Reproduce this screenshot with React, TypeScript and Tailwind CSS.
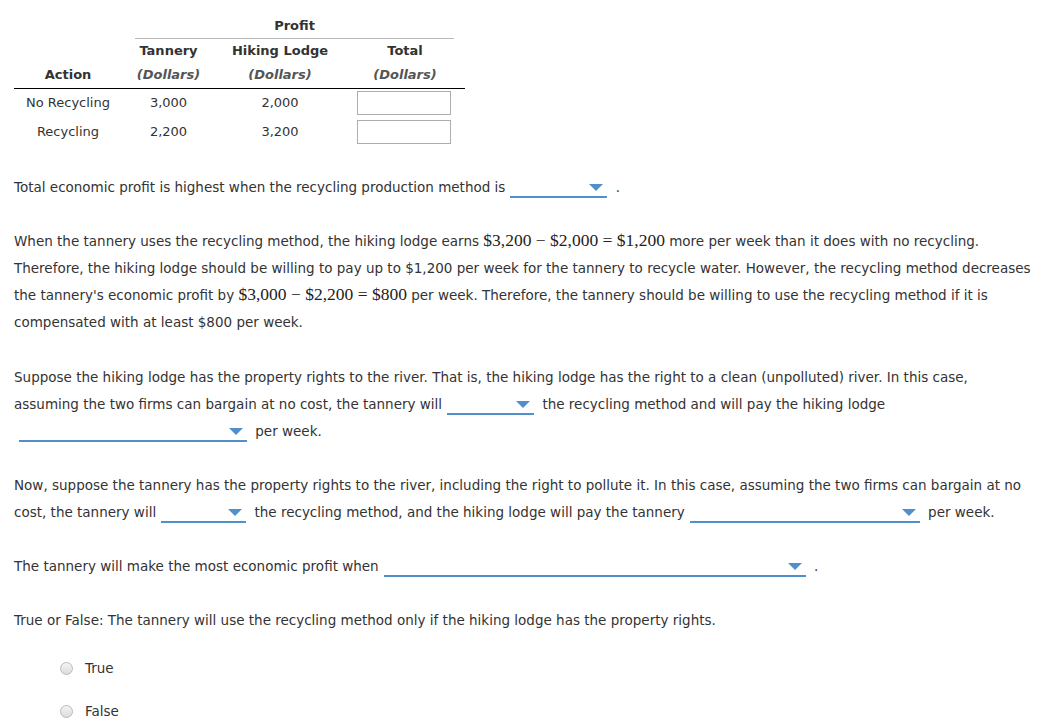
import React from "react";

const font = { fontFamily: '"DejaVu Sans", Verdana, sans-serif' };

function Dropdown({ w }: { w: string }) {
  return (
    <span
      className={`relative inline-block ${w} h-[18px] ml-[5px] mr-[4px] border-b-2 border-[#4f8fcb] align-[-6px]`}
    >
      <svg width="14" height="7" viewBox="0 0 14 7" className="absolute right-[4px] bottom-[5px]">
        <path d="M0 0 H14 L7 7 Z" fill="#4f8fcb" />
      </svg>
    </span>
  );
}

function M({ children }: { children: React.ReactNode }) {
  return (
    <span className="text-[17.5px] leading-none font-['Liberation_Serif',serif] text-[#222]">
      {children}
    </span>
  );
}

function Radio({ label }: { label: string }) {
  return (
    <div className="flex items-center h-[20px] pl-[46px]">
      <span className="w-[13px] h-[13px] rounded-full border border-[#b9b9b9] bg-gradient-to-b from-[#f4f4f4] to-[#dcdcdc]" />
      <span className="ml-[12px]">{label}</span>
    </div>
  );
}

function ProfitTable() {
  const cols = "grid grid-cols-[108px_93px_130px_120px] text-center";
  return (
    <div className="w-[451px] text-[13px]">
      <div className={cols}>
        <div />
        <div className="col-span-3 ml-[13px] mr-[11px] border-b border-[#b8b8b8] font-bold leading-[18px] pb-[3px]">
          Profit
        </div>
      </div>
      <div className={`${cols} font-bold leading-[18px] mt-[3px]`}>
        <div />
        <div>Tannery</div>
        <div>Hiking Lodge</div>
        <div>Total</div>
      </div>
      <div className={`${cols} leading-[18px] mt-[6px] pb-[4px] border-b-[1.5px] border-black`}>
        <div className="font-bold">Action</div>
        <div className="italic font-bold text-[#555]">(Dollars)</div>
        <div className="italic font-bold text-[#555]">(Dollars)</div>
        <div className="italic font-bold text-[#555]">(Dollars)</div>
      </div>
      {[
        ["No Recycling", "3,000", "2,000"],
        ["Recycling", "2,200", "3,200"],
      ].map((r, i) => (
        <div key={r[0]} className={`${cols} h-[25px] items-center ${i === 0 ? "mt-[1px]" : "mt-[4px]"}`}>
          <div>{r[0]}</div>
          <div>{r[1]}</div>
          <div>{r[2]}</div>
          <div className="flex justify-start pl-[12px]">
            <span className="block w-[94px] h-[24px] border border-[#adadad] bg-white" />
          </div>
        </div>
      ))}
    </div>
  );
}

export default function App() {
  return (
    <div style={font} className="bg-white text-[#333] text-[13.5px] pl-[14px] pr-[24px] pt-[17px] pb-[10px] min-h-[727px]">
      <ProfitTable />

      <p className="leading-[27px] mt-[30px]">
        Total economic profit is highest when the recycling production method is
        <Dropdown w="w-[97px]" /> .
      </p>

      <p className="leading-[27px] mt-[27px]">
        When the tannery uses the recycling method, the hiking lodge earns <M>$3,200 − $2,000 = $1,200</M> more per
        week than it does with no recycling. Therefore, the hiking lodge should be willing to pay up to $1,200 per week
        for the tannery to recycle water. However, the recycling method decreases the tannery's economic profit by{" "}
        <M>$3,000 − $2,200 = $800</M> per week. Therefore, the tannery should be willing to use the recycling method if
        it is compensated with at least $800 per week.
      </p>

      <p className="leading-[27px] mt-[28px]">
        Suppose the hiking lodge has the property rights to the river. That is, the hiking lodge has the right to a
        clean (unpolluted) river. In this case, assuming the two firms can bargain at no cost, the tannery will
        <Dropdown w="w-[87px]" /> the recycling method and will pay the hiking lodge
        <Dropdown w="w-[228px]" /> per week.
      </p>

      <p className="leading-[27px] mt-[27px]">
        Now, suppose the tannery has the property rights to the river, including the right to pollute it. In this case,
        assuming the two firms can bargain at no cost, the tannery will
        <Dropdown w="w-[85px]" /> the recycling method, and the hiking lodge will pay the tannery
        <Dropdown w="w-[230px]" /> per week.
      </p>

      <p className="leading-[27px] mt-[27px]">
        The tannery will make the most economic profit when
        <Dropdown w="w-[422px]" /> .
      </p>

      <p className="leading-[27px] mt-[27px]">
        True or False: The tannery will use the recycling method only if the hiking lodge has the property rights.
      </p>

      <div className="mt-[24px] flex flex-col gap-[23px]">
        <Radio label="True" />
        <Radio label="False" />
      </div>
    </div>
  );
}
